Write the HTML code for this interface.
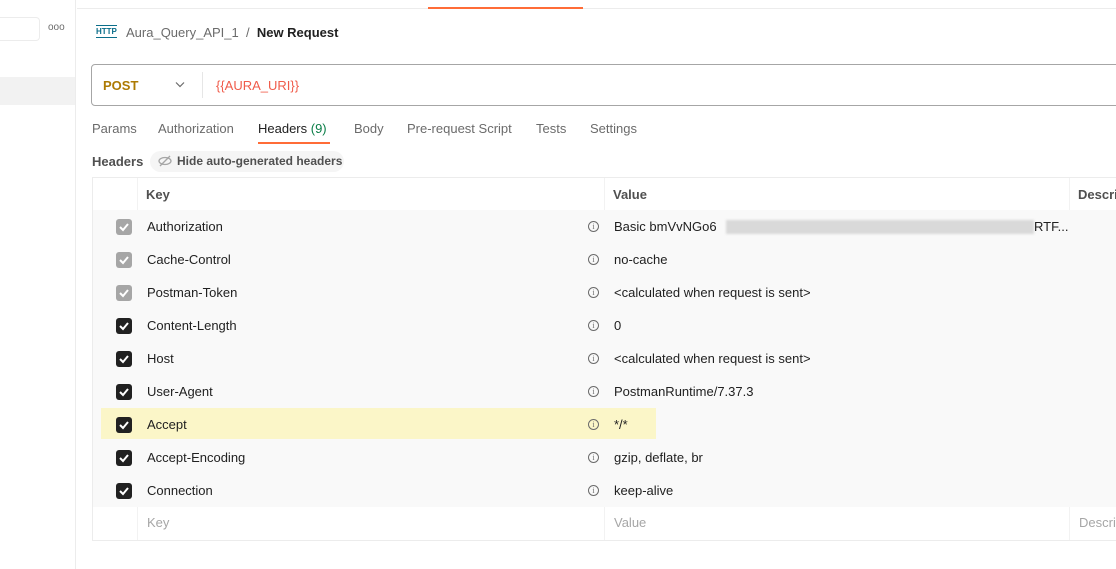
<!DOCTYPE html>
<html><head><meta charset="utf-8"><style>
*{box-sizing:border-box;margin:0;padding:0}
body{width:1116px;height:569px;overflow:hidden;background:#fff;font-family:"Liberation Sans",Arial,sans-serif;font-size:13px;color:#212121;position:relative}
.abs{position:absolute}
.sb{left:0;top:0;width:76px;height:569px;border-right:1px solid #ececec;background:#fff}
.chk{position:absolute;left:116px;width:16px;height:16px;border-radius:3px;background:#212121}
.chk.g{background:#a6a6a6}
.chk svg{position:absolute;left:2px;top:3px}
.row{position:absolute;left:93px;width:1023px;height:33px;background:#f9f9f9}
.k{position:absolute;left:147px;font-size:13px;color:#212121}
.v{position:absolute;left:614px;font-size:13px;color:#212121}
.i{position:absolute;left:588px;width:11px;height:11px;border:1px solid #6b6b6b;border-radius:50%;font-size:8px;line-height:9px;text-align:center;color:#6b6b6b;font-family:"Liberation Serif",serif}
</style></head><body>
<div class="abs sb"></div>
<div class="abs" style="left:0;top:17px;width:40px;height:24px;border:1px solid #ececec;border-left:none;border-radius:0 4px 4px 0"></div>
<div class="abs" style="left:48px;top:22px;font-size:10px;color:#6b6b6b;letter-spacing:0px">ooo</div>
<div class="abs" style="left:0;top:77px;width:75px;height:28px;background:#f2f2f2"></div>
<div class="abs" style="left:77px;top:8px;width:1039px;height:1px;background:#ececec"></div>
<div class="abs" style="left:428px;top:7px;width:155px;height:2px;background:#ff6c37"></div>
<div class="abs" style="left:96px;top:25px;font-size:8px;font-weight:bold;color:#0b6e8a;border-top:1px solid #0b6e8a;border-bottom:1px solid #0b6e8a;line-height:9px;padding:1px 0">HTTP</div>
<div class="abs" style="left:126px;top:25px;font-size:13px;color:#6b6b6b">Aura_Query_API_1 &nbsp;<span style="color:#6b6b6b">/</span>&nbsp; <b style="color:#212121">New Request</b></div>
<div class="abs" style="left:91px;top:64px;width:1040px;height:42px;border:1px solid #a6a6a6;border-radius:4px"></div>
<div class="abs" style="left:103px;top:78px;font-size:13px;font-weight:bold;color:#ad7a03">POST</div>
<svg class="abs" style="left:175px;top:81px" width="10" height="7"><path d="M1 1.5L5 5.5L9 1.5" stroke="#6b6b6b" stroke-width="1.2" fill="none"/></svg>
<div class="abs" style="left:202px;top:72px;width:1px;height:26px;background:#e6e6e6"></div>
<div class="abs" style="left:216px;top:78px;font-size:13px;color:#f05c4b">{{AURA_URI}}</div>
<div class="abs" style="top:121px;left:92px;font-size:13px;color:#6b6b6b">Params</div>
<div class="abs" style="top:121px;left:158px;font-size:13px;color:#6b6b6b">Authorization</div>
<div class="abs" style="top:121px;left:258px;font-size:13px;color:#212121">Headers <span style="color:#0a7d47">(9)</span></div>
<div class="abs" style="top:142px;left:258px;width:72px;height:2px;background:#ff6c37"></div>
<div class="abs" style="top:121px;left:354px;font-size:13px;color:#6b6b6b">Body</div>
<div class="abs" style="top:121px;left:407px;font-size:13px;color:#6b6b6b">Pre-request Script</div>
<div class="abs" style="top:121px;left:536px;font-size:13px;color:#6b6b6b">Tests</div>
<div class="abs" style="top:121px;left:590px;font-size:13px;color:#6b6b6b">Settings</div>
<div class="abs" style="top:154px;left:92px;font-size:13px;font-weight:bold;color:#505050">Headers</div>
<div class="abs" style="top:151px;left:150px;width:194px;height:21px;border-radius:11px;background:#f5f5f5"></div>
<svg class="abs" style="left:158px;top:155px" width="14" height="12"><ellipse cx="7" cy="6" rx="6" ry="3.5" fill="none" stroke="#a6a6a6" stroke-width="1.3"/><path d="M2 11L12 1" stroke="#a6a6a6" stroke-width="1.3"/></svg>
<div class="abs" style="top:154px;left:177px;font-size:12px;font-weight:bold;color:#505050">Hide auto-generated headers</div>
<div class="abs" style="left:92px;top:177px;width:1030px;height:364px;border:1px solid #ececec"></div>
<div class="abs" style="left:137px;top:178px;width:1px;height:32px;background:#f2f2f2"></div>
<div class="abs" style="left:604px;top:178px;width:1px;height:32px;background:#f2f2f2"></div>
<div class="abs" style="left:1069px;top:178px;width:1px;height:32px;background:#f2f2f2"></div>
<div class="abs" style="left:146px;top:187px;font-size:13px;font-weight:bold;color:#505050">Key</div>
<div class="abs" style="left:613px;top:187px;font-size:13px;font-weight:bold;color:#505050">Value</div>
<div class="abs" style="left:1078px;top:187px;font-size:13px;font-weight:bold;color:#505050">Descri</div>
<div class="row" style="top:210px;height:297px"></div>
<div class="abs" style="left:101px;top:408px;width:555px;height:31px;background:#fbf6c8"></div>
<div class="abs" style="left:726px;top:220px;width:308px;height:14px;background:#d9d9d9;filter:blur(1px)"></div>

<div class="chk g" style="top:219px"><svg width="12" height="10"><path d="M2 5l3 3l5-6" stroke="#fff" stroke-width="2" fill="none"/></svg></div>
<div class="k" style="top:219px">Authorization</div><div class="i" style="top:221px">i</div><div class="v" style="top:219px">Basic bmVvNGo6&nbsp;<span style="position:absolute;left:420px">RTF...</span></div>
<div class="chk g" style="top:252px"><svg width="12" height="10"><path d="M2 5l3 3l5-6" stroke="#fff" stroke-width="2" fill="none"/></svg></div>
<div class="k" style="top:252px">Cache-Control</div><div class="i" style="top:254px">i</div><div class="v" style="top:252px">no-cache</div>
<div class="chk g" style="top:285px"><svg width="12" height="10"><path d="M2 5l3 3l5-6" stroke="#fff" stroke-width="2" fill="none"/></svg></div>
<div class="k" style="top:285px">Postman-Token</div><div class="i" style="top:287px">i</div><div class="v" style="top:285px">&lt;calculated when request is sent&gt;</div>
<div class="chk" style="top:318px"><svg width="12" height="10"><path d="M2 5l3 3l5-6" stroke="#fff" stroke-width="2" fill="none"/></svg></div>
<div class="k" style="top:318px">Content-Length</div><div class="i" style="top:320px">i</div><div class="v" style="top:318px">0</div>
<div class="chk" style="top:351px"><svg width="12" height="10"><path d="M2 5l3 3l5-6" stroke="#fff" stroke-width="2" fill="none"/></svg></div>
<div class="k" style="top:351px">Host</div><div class="i" style="top:353px">i</div><div class="v" style="top:351px">&lt;calculated when request is sent&gt;</div>
<div class="chk" style="top:384px"><svg width="12" height="10"><path d="M2 5l3 3l5-6" stroke="#fff" stroke-width="2" fill="none"/></svg></div>
<div class="k" style="top:384px">User-Agent</div><div class="i" style="top:386px">i</div><div class="v" style="top:384px">PostmanRuntime/7.37.3</div>
<div class="chk" style="top:417px"><svg width="12" height="10"><path d="M2 5l3 3l5-6" stroke="#fff" stroke-width="2" fill="none"/></svg></div>
<div class="k" style="top:417px">Accept</div><div class="i" style="top:419px">i</div><div class="v" style="top:417px">*/*</div>
<div class="chk" style="top:450px"><svg width="12" height="10"><path d="M2 5l3 3l5-6" stroke="#fff" stroke-width="2" fill="none"/></svg></div>
<div class="k" style="top:450px">Accept-Encoding</div><div class="i" style="top:452px">i</div><div class="v" style="top:450px">gzip, deflate, br</div>
<div class="chk" style="top:483px"><svg width="12" height="10"><path d="M2 5l3 3l5-6" stroke="#fff" stroke-width="2" fill="none"/></svg></div>
<div class="k" style="top:483px">Connection</div><div class="i" style="top:485px">i</div><div class="v" style="top:483px">keep-alive</div>

<div class="abs" style="left:137px;top:507px;width:1px;height:33px;background:#f2f2f2"></div>
<div class="abs" style="left:604px;top:507px;width:1px;height:33px;background:#f2f2f2"></div>
<div class="abs" style="left:1069px;top:507px;width:1px;height:33px;background:#f2f2f2"></div>
<div class="abs" style="left:147px;top:515px;color:#a6a6a6">Key</div>
<div class="abs" style="left:614px;top:515px;color:#a6a6a6">Value</div>
<div class="abs" style="left:1079px;top:515px;color:#a6a6a6">Descri</div>
</body></html>
